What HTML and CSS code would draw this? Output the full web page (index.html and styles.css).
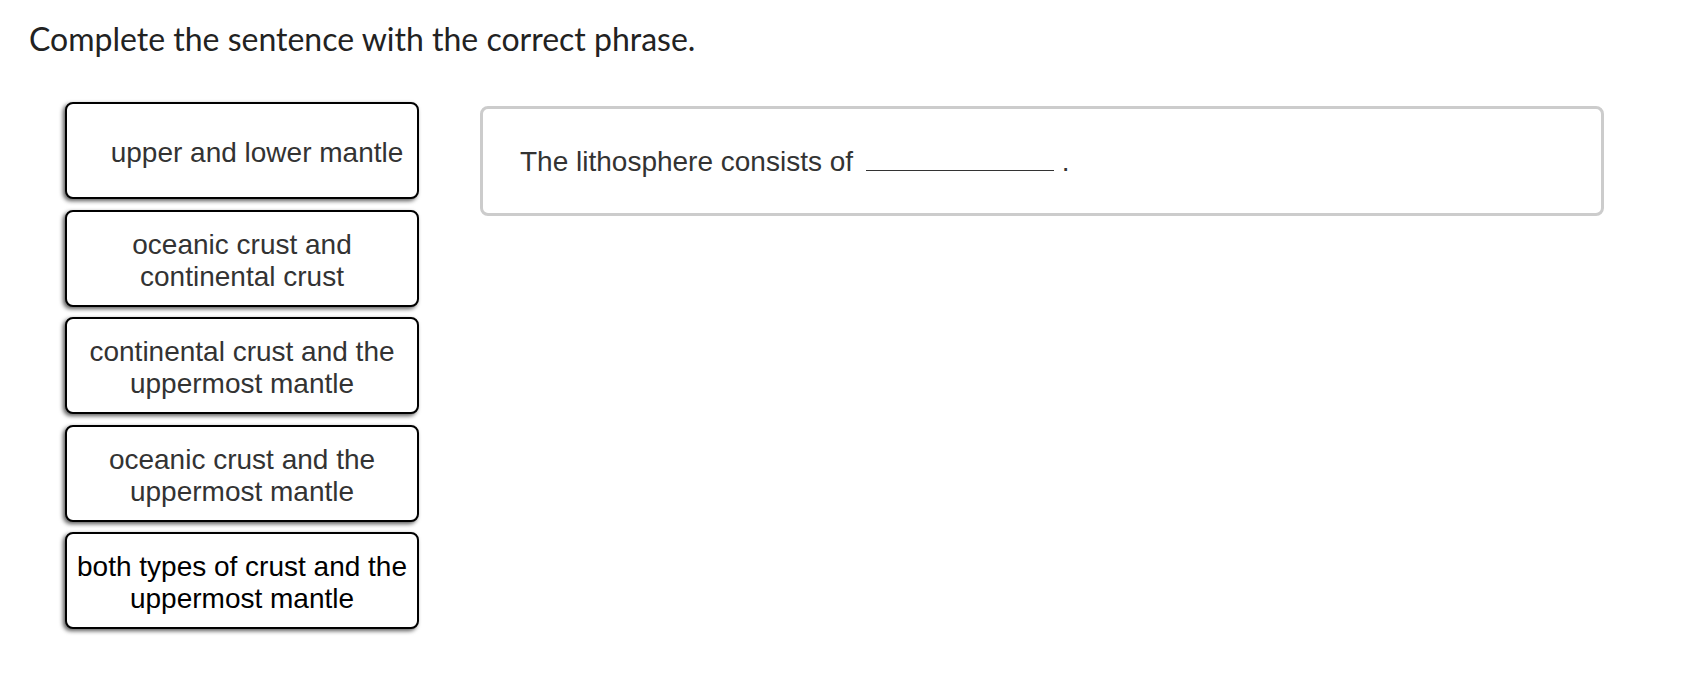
FILE: index.html
```html
<!DOCTYPE html>
<html lang="en">
<head>
  <meta charset="UTF-8">
  <meta name="viewport" content="width=device-width, initial-scale=1.0">
  <title>Complete the sentence</title>
  <link rel="stylesheet" href="styles.css">
</head>
<body>
  <div class="question">
    <p class="prompt">Complete the sentence with the correct phrase.</p>

    <div class="activity">
      <!-- Answer choices -->
      <div class="choices">
        <div class="choice choice-offset">upper and lower mantle</div>
        <div class="choice">oceanic crust and continental crust</div>
        <div class="choice">continental crust and the uppermost mantle</div>
        <div class="choice">oceanic crust and the uppermost mantle</div>
        <div class="choice choice-dark">both types of crust and the uppermost mantle</div>
      </div>

      <!-- Sentence with drop target -->
      <div class="sentence">
        The lithosphere consists of <span class="blank"></span><span class="period">.</span>
      </div>
    </div>
  </div>
</body>
</html>
```

FILE: styles.css
```css
body {
  margin: 0;
  background: #fff;
  font-family: "Liberation Sans", Arial, sans-serif;
  color: #333;
}

.question {
  padding: 17px 29px;
}

.prompt {
  margin: 0;
  font-family: Lato, "Open Sans", sans-serif;
  font-size: 32px;
  line-height: 44px;
  color: #222;
}

/* Choices column + sentence box */
.activity {
  display: flex;
  align-items: flex-start;
  gap: 61px;
  margin-top: 41px;
  padding-left: 36px;
}

.choices {
  display: flex;
  flex-direction: column;
  gap: 10.5px;
}

.choice {
  box-sizing: border-box;
  width: 354px;
  min-height: 97px;
  padding: 5px 8px 0;
  display: flex;
  align-items: center;
  justify-content: center;
  text-align: center;
  font-size: 28px;
  line-height: 32px;
  color: #333;
  background: #fff;
  border: 2px solid #000;
  border-radius: 8px;
  box-shadow: -2px 2px 4px rgba(0, 0, 0, 0.65);
  cursor: grab;
}

.choice-offset {
  padding: 5px 0 0 30px;
}

.choice-dark {
  color: #000;
}

.sentence {
  box-sizing: border-box;
  width: 1124px;
  margin-top: 4px;
  padding: 35px 37px;
  font-size: 28px;
  line-height: 32px;
  color: #333;
  border: 3px solid #ccc;
  border-radius: 8px;
}

.blank {
  display: inline-block;
  width: 188px;
  height: 26px;
  margin-left: 5px;
  border-bottom: 1px solid #333;
  vertical-align: baseline;
}

.period {
  margin-left: 8px;
}
```
